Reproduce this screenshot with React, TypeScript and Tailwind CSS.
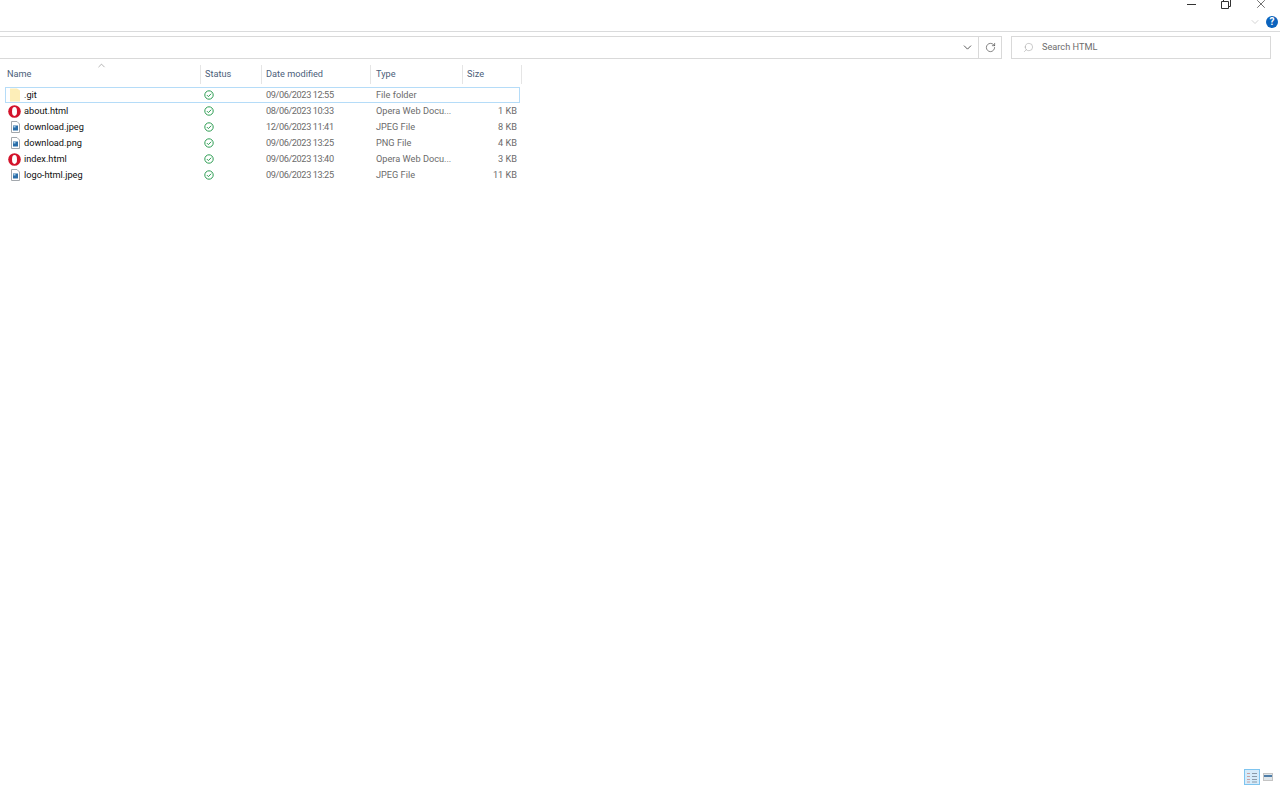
import { ChevronDown, ChevronUp, RotateCw, Search, X } from 'lucide-react'

const files = [
  { name: '.git', icon: 'folder', date: '09/06/2023 12:55', type: 'File folder', size: '' },
  { name: 'about.html', icon: 'opera', date: '08/06/2023 10:33', type: 'Opera Web Docu...', size: '1 KB' },
  { name: 'download.jpeg', icon: 'image', date: '12/06/2023 11:41', type: 'JPEG File', size: '8 KB' },
  { name: 'download.png', icon: 'image', date: '09/06/2023 13:25', type: 'PNG File', size: '4 KB' },
  { name: 'index.html', icon: 'opera', date: '09/06/2023 13:40', type: 'Opera Web Docu...', size: '3 KB' },
  { name: 'logo-html.jpeg', icon: 'image', date: '09/06/2023 13:25', type: 'JPEG File', size: '11 KB' },
]

function FileIcon({ icon }: { icon: string }) {
  if (icon === 'folder') {
    return (
      <svg width="10" height="14" viewBox="0 0 10 14">
        <path d="M0 0.5h7l3 2v11h-10z" fill="#fdeeb8" />
      </svg>
    )
  }
  if (icon === 'opera') {
    return (
      <svg width="13" height="13" viewBox="0 0 13 13" className="-ml-[2px]">
        <circle cx="6.5" cy="6.5" r="6.3" fill="#d3132b" />
        <ellipse cx="6.5" cy="6.5" rx="2.5" ry="4.4" fill="#fff" />
      </svg>
    )
  }
  return (
    <svg width="9" height="12" viewBox="0 0 9 12">
      <path d="M0.5 0.5h5.5l2.5 2.5v8.5h-8z" fill="#fff" stroke="#a3a8ad" />
      <rect x="2" y="4.5" width="5" height="5" fill="#2b6ea8" />
      <rect x="2.5" y="5" width="2" height="1.5" fill="#a6cbe6" />
    </svg>
  )
}

function StatusIcon() {
  return (
    <svg width="10" height="10" viewBox="0 0 10 10" fill="none" stroke="#2f9e54" strokeWidth="1">
      <circle cx="5" cy="5" r="4.2" />
      <path d="M2.9 5.1l1.5 1.5 2.8-2.9" />
    </svg>
  )
}

function HeaderCell({ label, className }: { label: string; className: string }) {
  return (
    <div className={`flex items-center h-[19px] pb-[2px] border-r border-[#e5e5e5] text-[#4c607a] ${className}`}>
      {label}
    </div>
  )
}

export default function App() {
  return (
    <div
      className="relative flex flex-col w-[1280px] h-[786px] overflow-hidden bg-white text-[9.2px] leading-none text-[#1f1f1f]"
      style={{ fontFamily: 'Roboto, "Open Sans", sans-serif' }}
    >
      {/* Title + ribbon */}
      <div className="relative h-[32px] shrink-0 border-b border-[#dadbdc]">
        <div className="absolute left-[1187px] top-[4px] w-[9px] h-px bg-[#333]" />
        <svg width="10" height="10" viewBox="0 0 10 10" fill="none" stroke="#333" className="absolute left-[1221px] top-[-1px]">
          <path d="M2.5 2.5v-2h7v7h-2M0.5 2.5h7v7h-7z" />
        </svg>
        <X size={14} strokeWidth={1.1} className="absolute left-[1254px] top-[-3px] text-[#222]" />
        <ChevronDown size={12} strokeWidth={1} className="absolute left-[1249px] top-[16px] text-[#a9a9a9]" />
        <div className="absolute left-[1266px] top-[16px] flex items-center justify-center w-[12px] h-[12px] rounded-full bg-[#0b63bd] text-white text-[10px] font-bold">
          ?
        </div>
      </div>

      {/* Address bar */}
      <div className="flex h-[23px] mt-[4px] shrink-0 pr-[9px]">
        <div className="flex items-center justify-end w-[979px] border-y border-r border-[#d9d9d9] pr-[4px]">
          <ChevronDown size={13} strokeWidth={1.6} className="text-[#444]" />
        </div>
        <div className="flex items-center justify-center w-[23px] border-y border-r border-[#d9d9d9]">
          <RotateCw size={11} strokeWidth={1.4} className="text-[#444]" />
        </div>
        <div className="flex items-center flex-1 ml-[9px] border border-[#d9d9d9] pl-[11px] text-[#6d6d6d]">
          <Search size={11} strokeWidth={1.1} className="text-[#9a9a9a] -scale-x-100" />
          <span className="ml-[8px] pb-[1px]">Search HTML</span>
        </div>
      </div>

      {/* Column headers */}
      <div className="relative flex mt-[5px] pt-[1px] shrink-0">
        <ChevronUp size={11} strokeWidth={1.2} className="absolute left-[96px] top-[-4px] text-[#777]" />
        <div className="w-[2px]" />
        <HeaderCell label="Name" className="w-[199px] pl-[5px]" />
        <HeaderCell label="Status" className="w-[61px] pl-[4px]" />
        <HeaderCell label="Date modified" className="w-[109px] pl-[4px]" />
        <HeaderCell label="Type" className="w-[92px] pl-[5px]" />
        <HeaderCell label="Size" className="w-[59px] pl-[4px]" />
      </div>

      {/* File rows */}
      <div className="flex flex-col w-[515px] ml-[5px] mt-[3px]">
        {files.map((file, i) => (
          <div
            key={file.name}
            className={`flex items-center h-[16px] border ${i === 0 ? 'border-[#b5dcf8]' : 'border-transparent'}`}
          >
            <div className="flex items-center justify-center w-[18px]">
              <FileIcon icon={file.icon} />
            </div>
            <div className="w-[180px] text-[#111]">{file.name}</div>
            <div className="flex w-[62px]">
              <StatusIcon />
            </div>
            <div className="w-[110px] text-[#6b6b6b] tracking-[-0.4px] whitespace-nowrap">{file.date}</div>
            <div className="w-[90px] text-[#6b6b6b] whitespace-nowrap">{file.type}</div>
            <div className="flex-1 text-right pr-[2px] text-[#6b6b6b]">{file.size}</div>
          </div>
        ))}
      </div>

      {/* View toggles */}
      <div className="absolute left-[1244px] top-[769px] flex items-center gap-[3px]">
        <div className="flex items-center justify-center w-[16px] h-[16px] border border-[#7ec4ef] bg-[#d5ebfa]">
          <svg width="12" height="11" viewBox="0 0 12 11" fill="none">
            <path d="M1 1.5h3M1 4.5h3M1 7.5h3M1 10h3" stroke="#c9a0a0" />
            <path d="M6 1.5h5M6 4.5h5M6 7.5h5M6 10h5" stroke="#8a9aa9" />
          </svg>
        </div>
        <div className="flex items-center justify-center w-[10px] h-[8px] border border-[#c4c4c4]">
          <svg width="8" height="6" viewBox="0 0 8 6">
            <rect width="8" height="6" fill="#dfe6ea" />
            <rect y="1" width="8" height="2" fill="#4f7da8" />
          </svg>
        </div>
      </div>
    </div>
  )
}
